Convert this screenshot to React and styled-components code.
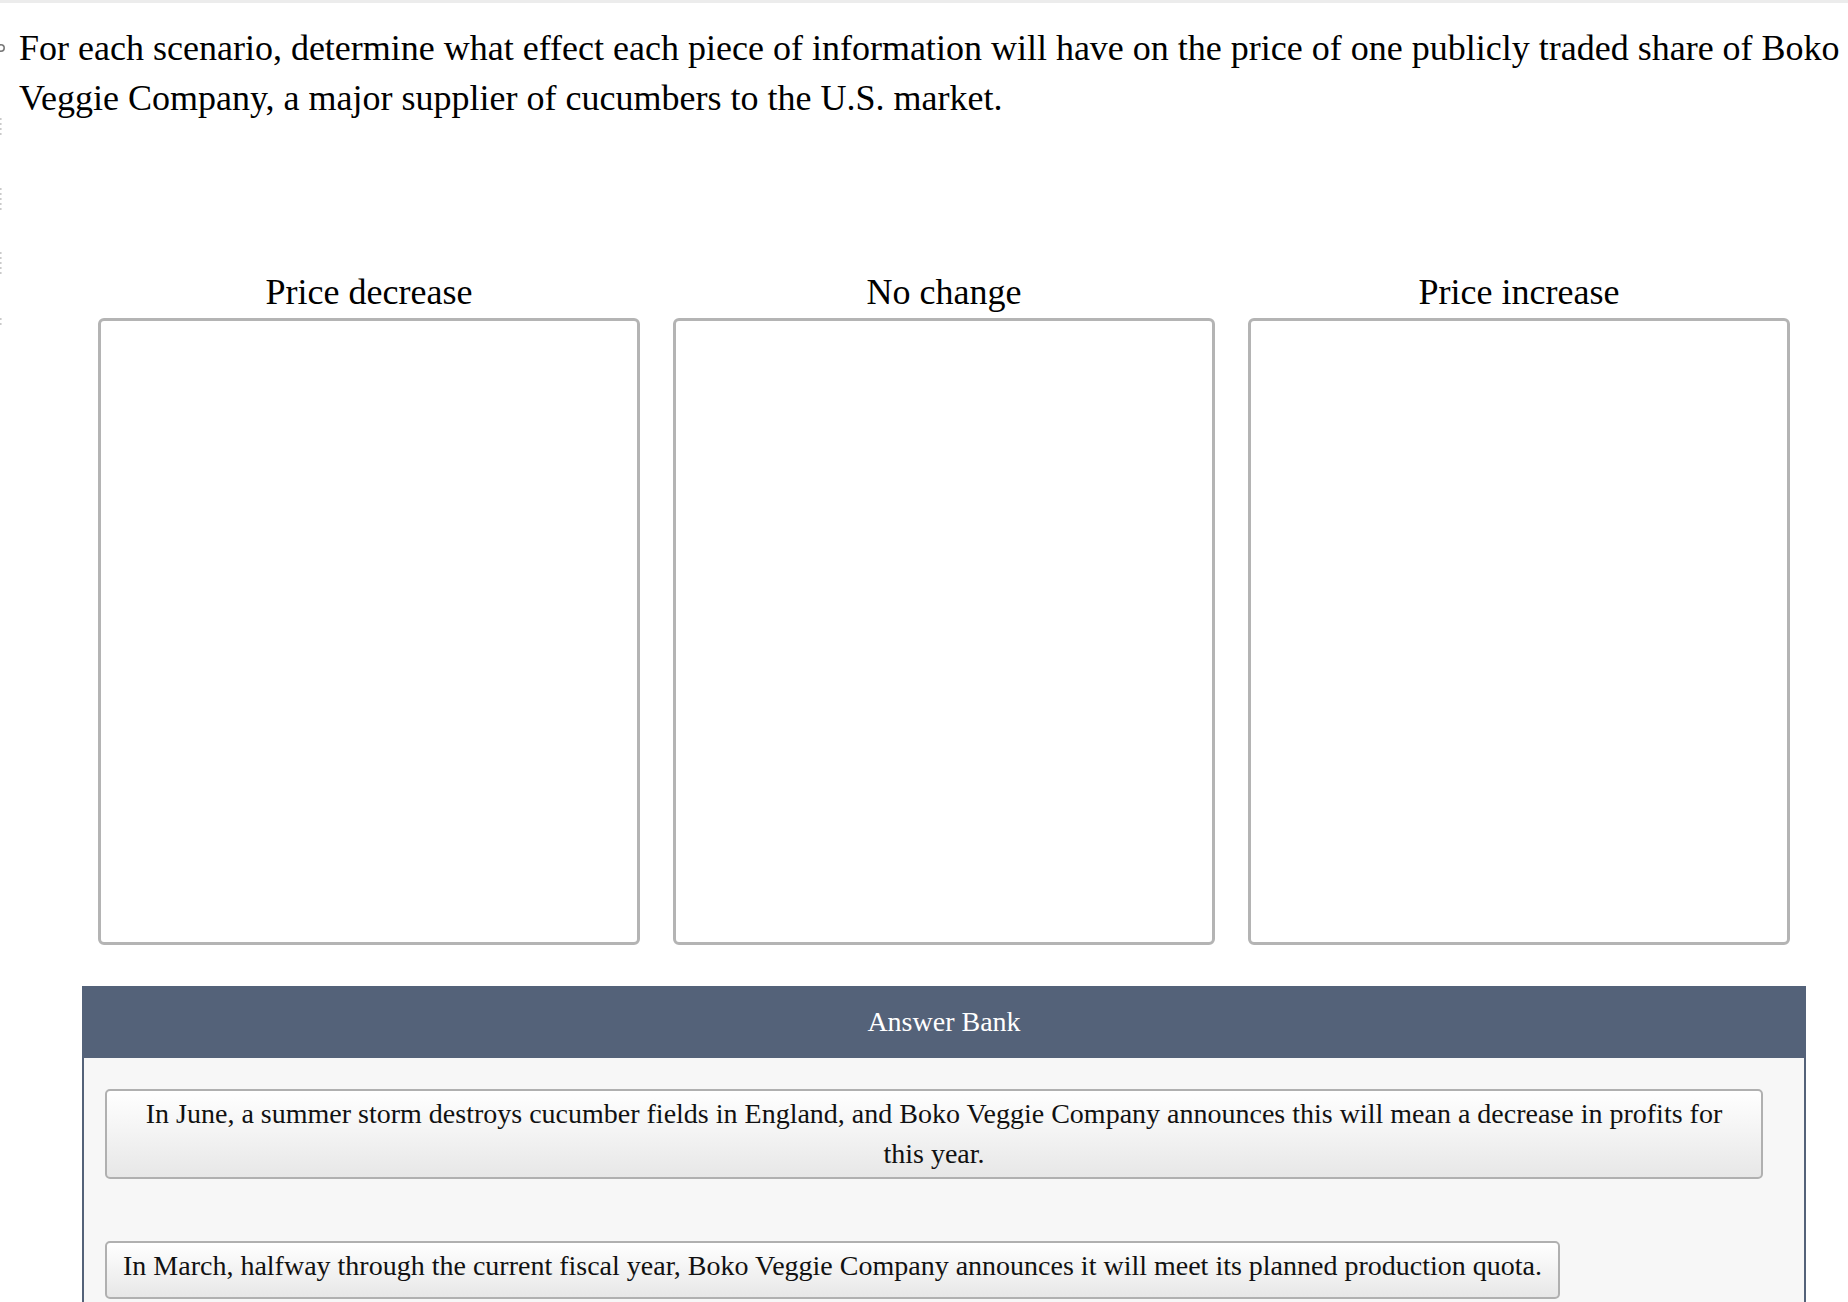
import React from "react";
import styled, { createGlobalStyle } from "styled-components";

const Global = createGlobalStyle`
  html, body { margin: 0; padding: 0; background: #ffffff; }
  body { font-family: "Liberation Serif", "Times New Roman", serif; color: #000; }
`;

const Page = styled.div`
  position: relative;
  width: 1848px;
  min-height: 1302px;
  overflow: hidden;
`;

const TopBar = styled.div`
  height: 3px;
  background: #ececec;
`;

const EdgeMarks = styled.svg`
  position: absolute;
  left: 0;
  top: 0;
`;

const Content = styled.div`
  padding: 20px 0 0 19px;
`;

const Question = styled.p`
  margin: 0;
  font-size: 36px;
  line-height: 50px;
  color: #000;
`;

const Columns = styled.div`
  display: grid;
  grid-template-columns: repeat(3, 542px);
  column-gap: 33px;
  margin: 149px 0 0 79px;
`;

const Column = styled.div`
  display: flex;
  flex-direction: column;
  align-items: stretch;
`;

const ColumnTitle = styled.div`
  font-size: 36px;
  line-height: 40px;
  text-align: center;
  margin-bottom: 6px;
`;

const DropZone = styled.div`
  box-sizing: border-box;
  height: 627px;
  border: 3px solid #b4b4b4;
  border-radius: 6px;
  background: #fff;
`;

const Bank = styled.section`
  margin: 41px 0 0 82px;
  width: 1724px;
`;

const BankHeader = styled.div`
  height: 72px;
  background: #546279;
  color: #fff;
  font-size: 28px;
  display: flex;
  align-items: center;
  justify-content: center;
`;

const BankBody = styled.div`
  background: #f7f7f7;
  border-left: 2px solid #546279;
  border-right: 2px solid #546279;
  padding: 31px 41px 40px 21px;
  display: flex;
  flex-direction: column;
  align-items: flex-start;
  gap: 62px;
`;

const Card = styled.div`
  box-sizing: border-box;
  min-height: 58px;
  padding: 3px 16px;
  border: 2px solid #b0b0b0;
  border-radius: 5px;
  background: linear-gradient(to bottom, #ffffff, #e7e7e7);
  font-size: 28px;
  line-height: 40px;
  text-align: ${(p) => (p.$center ? "center" : "left")};
  color: #111;
`;

const columns = ["Price decrease", "No change", "Price increase"];

const cards = [
  "In June, a summer storm destroys cucumber fields in England, and Boko Veggie Company announces this will mean a decrease in profits for this year.",
  "In March, halfway through the current fiscal year, Boko Veggie Company announces it will meet its planned production quota.",
];

export default function App() {
  return (
    <Page>
      <Global />
      <TopBar />
      <EdgeMarks width="8" height="340" viewBox="0 0 8 340">
        <circle cx="1" cy="48" r="3.2" fill="none" stroke="#7a7a7a" strokeWidth="1.6" />
        <g stroke="#c8c8c8" strokeWidth="1.5" strokeDasharray="2 3">
          <line x1="0.8" y1="118" x2="0.8" y2="136" />
          <line x1="0.8" y1="188" x2="0.8" y2="212" />
          <line x1="0.8" y1="252" x2="0.8" y2="276" />
          <line x1="0.8" y1="318" x2="0.8" y2="326" />
        </g>
      </EdgeMarks>
      <Content>
        <Question>
          For each scenario, determine what effect each piece of information will have on the price of one publicly traded share of Boko Veggie Company, a major supplier of cucumbers to the U.S. market.
        </Question>
        <Columns>
          {columns.map((c) => (
            <Column key={c}>
              <ColumnTitle>{c}</ColumnTitle>
              <DropZone />
            </Column>
          ))}
        </Columns>
      </Content>
      <Bank>
        <BankHeader>Answer Bank</BankHeader>
        <BankBody>
          <Card $center>{cards[0]}</Card>
          <Card>{cards[1]}</Card>
        </BankBody>
      </Bank>
    </Page>
  );
}
